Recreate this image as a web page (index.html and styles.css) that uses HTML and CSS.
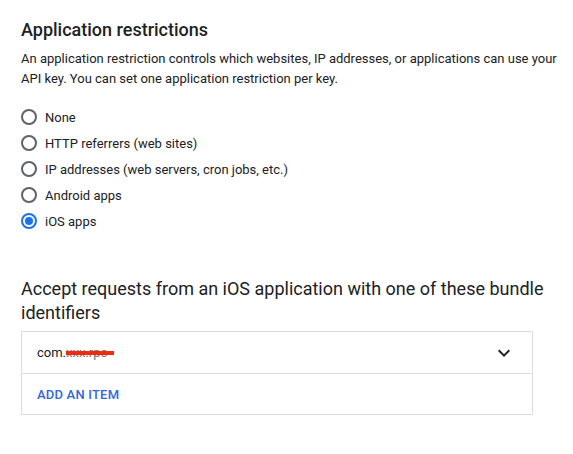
FILE: index.html
```html
<!DOCTYPE html>
<html lang="en">
<head>
    <meta charset="UTF-8">
    <meta name="viewport" content="width=device-width, initial-scale=1.0">
    <title>Application restrictions</title>
    <link rel="stylesheet" href="styles.css">
</head>
<body>
    <div class="section">
        <h2 class="title">Application restrictions</h2>
        <p class="desc">An application restriction controls which websites, IP addresses, or applications can use your API key. You can set one application restriction per key.</p>

        <div class="radio-group">
            <label class="radio"><span class="circle"></span>None</label>
            <label class="radio"><span class="circle"></span>HTTP referrers (web sites)</label>
            <label class="radio"><span class="circle"></span>IP addresses (web servers, cron jobs, etc.)</label>
            <label class="radio"><span class="circle"></span>Android apps</label>
            <label class="radio checked"><span class="circle"></span>iOS apps</label>
        </div>

        <h3 class="subtitle">Accept requests from an iOS application with one of these bundle identifiers</h3>

        <div class="item-list">
            <div class="item">
                <span class="bundle">com.<span class="hidden">xxx.rpc</span><span class="redact"></span></span>
                <svg class="chevron" width="24" height="24" viewBox="0 0 24 24">
                    <path d="M7.41 8.59 12 13.17l4.59-4.58L18 10l-6 6-6-6z" fill="#202124"/>
                </svg>
            </div>
            <div class="add-item">ADD AN ITEM</div>
        </div>
    </div>
</body>
</html>
```

FILE: styles.css
```css
* {
    margin: 0;
    padding: 0;
    box-sizing: border-box;
}

body {
    font-family: Roboto, 'Liberation Sans', Arial, sans-serif;
    color: #202124;
    background: white;
}

.section {
    padding: 18px 16px 0 21px;
    width: 573px;
}

.title {
    font-size: 18px;
    font-weight: 500;
    line-height: 24px;
    margin-bottom: 7px;
}

.desc {
    font-size: 13px;
    line-height: 20px;
    margin-bottom: 15px;
}

.radio-group {
    display: flex;
    flex-direction: column;
    margin-bottom: 43px;
}

.radio {
    display: flex;
    align-items: center;
    gap: 8px;
    height: 26px;
    font-size: 13px;
}

.circle {
    width: 16px;
    height: 16px;
    border: 2px solid #5f6368;
    border-radius: 50%;
    position: relative;
}

.radio.checked .circle {
    border-color: #1a73e8;
}

.radio.checked .circle::after {
    content: '';
    position: absolute;
    top: 2px;
    left: 2px;
    width: 8px;
    height: 8px;
    border-radius: 50%;
    background: #1a73e8;
}

.subtitle {
    font-size: 18px;
    font-weight: 400;
    line-height: 24px;
    margin-bottom: 6px;
}

.item-list {
    border: 1px solid #dadce0;
    width: 512px;
}

.item {
    display: flex;
    align-items: center;
    justify-content: space-between;
    height: 42px;
    padding: 0 16px 0 15px;
    border-bottom: 1px solid #dadce0;
}

.bundle {
    font-size: 13px;
    position: relative;
}

.hidden {
    color: #70757a;
}

.redact {
    position: absolute;
    left: 29px;
    top: 6px;
    width: 48px;
    height: 4px;
    background: #f02a0c;
}

.chevron {
    display: block;
}

.add-item {
    height: 40px;
    display: flex;
    align-items: center;
    padding-left: 15px;
    font-size: 13px;
    font-weight: 500;
    color: #3367d6;
    letter-spacing: 0.2px;
}
```
